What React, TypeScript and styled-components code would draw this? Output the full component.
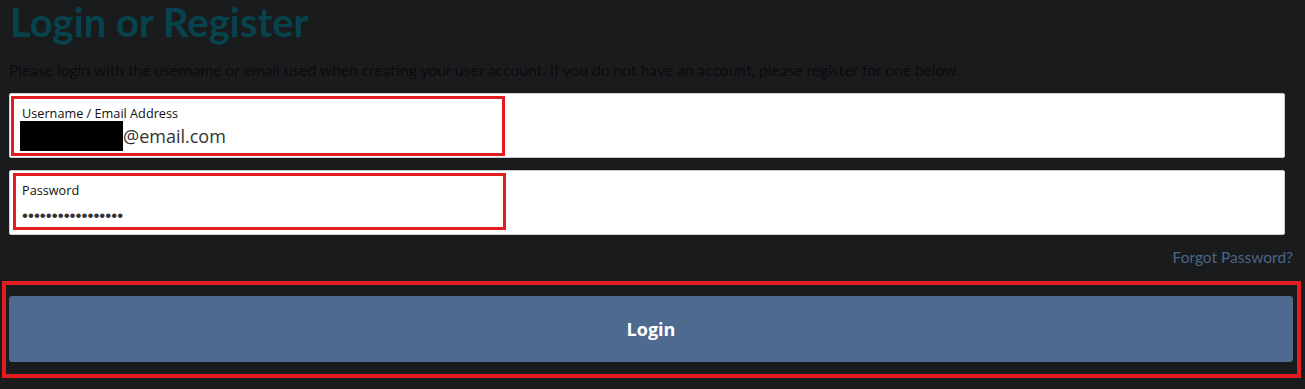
import React from "react";
import styled, { createGlobalStyle } from "styled-components";

const GlobalStyle = createGlobalStyle`
  html, body {
    margin: 0;
    padding: 0;
    background: #1a1b1d;
  }
  body {
    font-family: "Lato", "Liberation Sans", sans-serif;
  }
`;

const Page = styled.div`
  position: relative;
  width: 1305px;
  height: 389px;
  padding: 2px 12px 0 9px;
  box-sizing: border-box;
  display: flex;
  flex-direction: column;
`;

const Title = styled.h1`
  margin: 0;
  padding: 0 0 0 1px;
  font-family: "Lato", sans-serif;
  font-weight: 700;
  font-size: 40px;
  line-height: 40px;
  color: #07434d;
`;

const Intro = styled.p`
  margin: 18px 0 0;
  font-family: "Lato", sans-serif;
  font-size: 15.6px;
  line-height: 20px;
  color: #0b0c0d;
`;

const Field = styled.div<{ $top: number }>`
  margin: ${(p) => p.$top}px 8px 0 0;
  height: 65px;
  background: #fff;
  border: 1px solid #c9ccd2;
  border-radius: 2px;
  box-sizing: border-box;
  padding: 11px 12px 0;
  display: flex;
  flex-direction: column;
`;

const Label = styled.label`
  font-family: "Open Sans", sans-serif;
  font-size: 12.7px;
  line-height: 16px;
  color: #111;
`;

const ValueRow = styled.div`
  display: flex;
  align-items: center;
  height: 30px;
`;

const Redacted = styled.span`
  display: inline-block;
  width: 103px;
  height: 30px;
  margin-left: -2px;
  background: #000;
`;

const Value = styled.span`
  font-family: "Open Sans", sans-serif;
  font-size: 18px;
  color: #333;
`;

const Dots = styled.span`
  font-family: "Liberation Sans", sans-serif;
  font-size: 17px;
  color: #333;
  margin-top: 6px;
`;

const ForgotRow = styled.div`
  display: flex;
  justify-content: flex-end;
  margin-top: 12px;
`;

const ForgotLink = styled.a`
  font-family: "Lato", sans-serif;
  font-size: 15.5px;
  line-height: 20px;
  color: #4a6688;
  text-decoration: none;
`;

const LoginButton = styled.button`
  margin-top: 29px;
  height: 66px;
  width: 100%;
  border: none;
  border-radius: 3px;
  background: #4f6a8f;
  color: #fff;
  font-family: "Open Sans", sans-serif;
  font-weight: 700;
  font-size: 18px;
`;

const Highlight = styled.div<{ $x: number; $y: number; $w: number; $h: number; $t: number }>`
  position: absolute;
  left: ${(p) => p.$x}px;
  top: ${(p) => p.$y}px;
  width: ${(p) => p.$w}px;
  height: ${(p) => p.$h}px;
  border: ${(p) => p.$t}px solid #e21d22;
  box-sizing: border-box;
  pointer-events: none;
`;

export default function App() {
  return (
    <>
      <GlobalStyle />
      <Page>
        <Title>Login or Register</Title>
        <Intro>
          Please login with the username or email used when creating your user account. If you do not have an account, please register for one below.
        </Intro>
        <Field $top={13}>
          <Label>Username / Email Address</Label>
          <ValueRow>
            <Redacted />
            <Value>@email.com</Value>
          </ValueRow>
        </Field>
        <Field $top={12}>
          <Label>Password</Label>
          <ValueRow>
            <Dots>•••••••••••••••••</Dots>
          </ValueRow>
        </Field>
        <ForgotRow>
          <ForgotLink href="#">Forgot Password?</ForgotLink>
        </ForgotRow>
        <LoginButton>Login</LoginButton>

        <Highlight $x={11} $y={96} $w={494} $h={60} $t={3} />
        <Highlight $x={13} $y={173} $w={493} $h={57} $t={3} />
        <Highlight $x={2} $y={281} $w={1299} $h={97} $t={4} />
      </Page>
    </>
  );
}
